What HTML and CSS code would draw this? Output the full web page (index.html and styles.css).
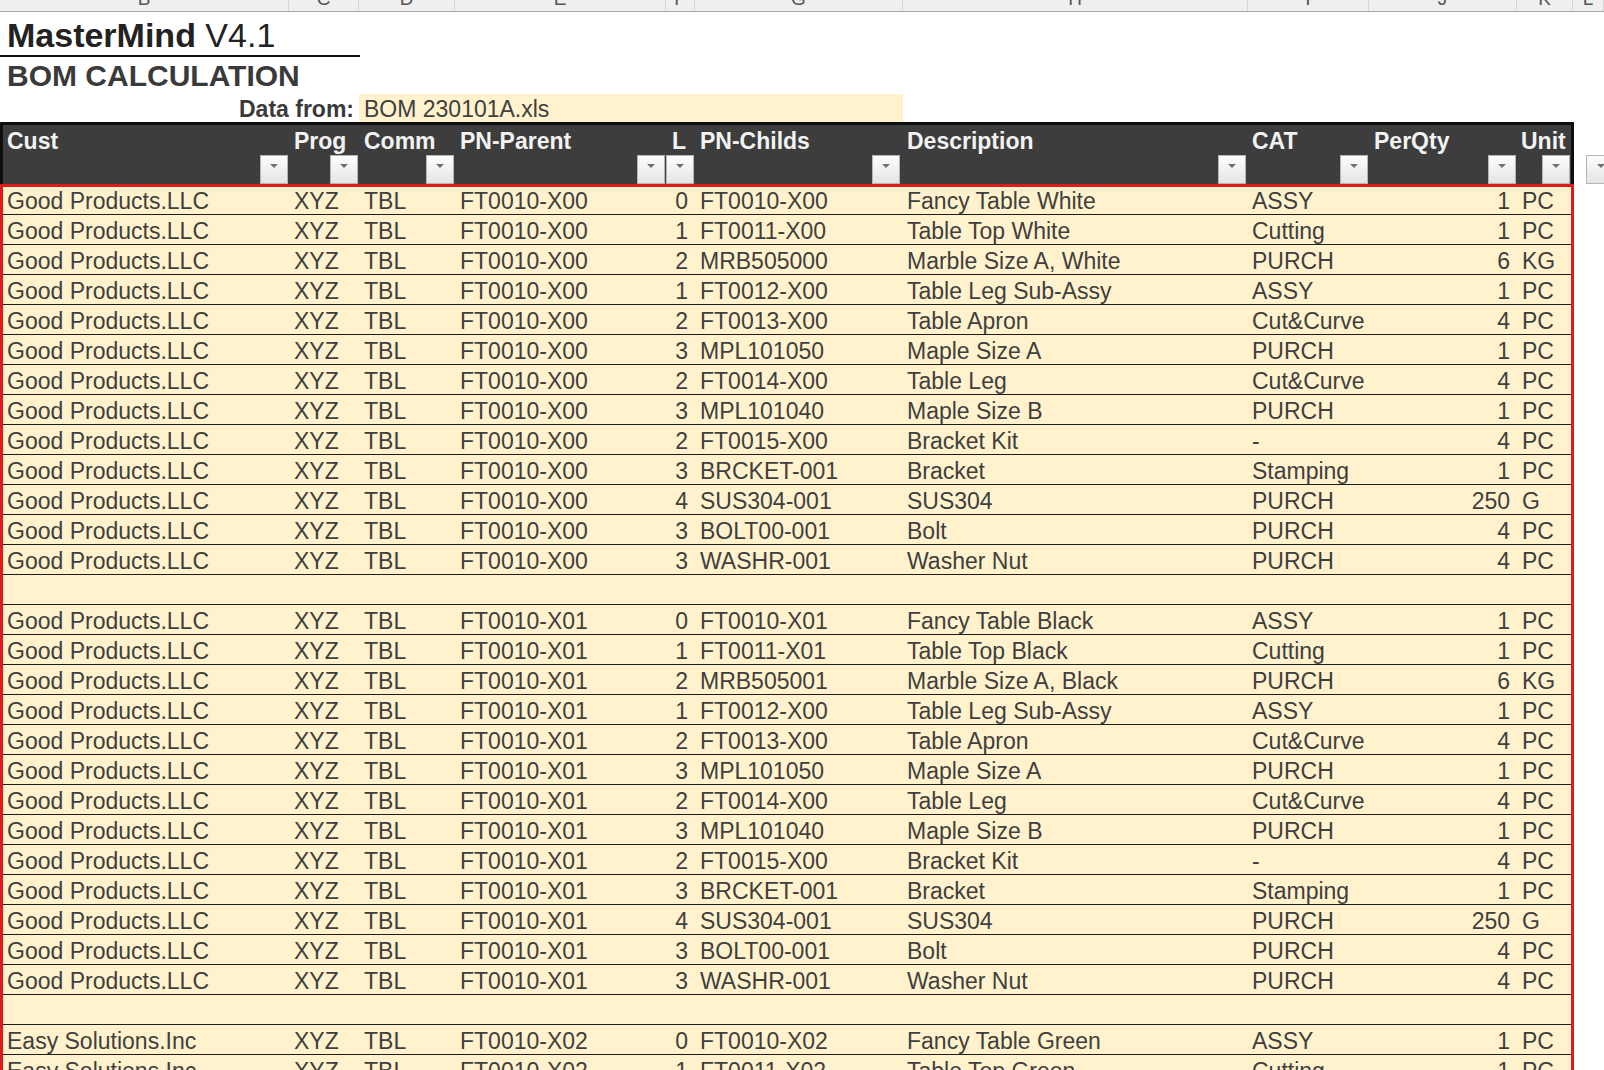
FILE: index.html
```html
<!DOCTYPE html>
<html lang="en">
<head>
<meta charset="utf-8">
<title>MasterMind V4.1 - BOM Calculation</title>
<link rel="stylesheet" href="styles.css">
</head>
<body>
<div class="sheet">
  <div class="colbar">
    <div class="ch">B</div><div class="ch">C</div><div class="ch">D</div><div class="ch">E</div><div class="ch">F</div><div class="ch">G</div><div class="ch">H</div><div class="ch">I</div><div class="ch">J</div><div class="ch">K</div><div class="ch">L</div>
  </div>

  <div class="title"><b>MasterMind</b> V4.1</div>
  <div class="subtitle">BOM CALCULATION</div>
  <div class="source">
    <div class="src-label">Data from:</div>
    <div class="src-value">BOM 230101A.xls</div>
  </div>

  <div class="table-area">
    <div class="table">
      <div class="thead">
        <div class="hrow">
          <span>Cust</span><span>Prog</span><span>Comm</span><span>PN-Parent</span><span>L</span><span>PN-Childs</span><span>Description</span><span>CAT</span><span>PerQty</span><span>Unit</span>
        </div>
        <div class="filters">
          <span class="dd"></span><span class="dd"></span><span class="dd"></span><span class="dd"></span><span class="dd"></span><span class="dd"></span><span class="dd"></span><span class="dd"></span><span class="dd"></span><span class="dd"></span>
        </div>
      </div>
      <div class="tbody">
        <div class="row"><span>Good Products.LLC</span><span>XYZ</span><span>TBL</span><span>FT0010-X00</span><span>0</span><span>FT0010-X00</span><span>Fancy Table White</span><span>ASSY</span><span>1</span><span>PC</span></div>
        <div class="row"><span>Good Products.LLC</span><span>XYZ</span><span>TBL</span><span>FT0010-X00</span><span>1</span><span>FT0011-X00</span><span>Table Top White</span><span>Cutting</span><span>1</span><span>PC</span></div>
        <div class="row"><span>Good Products.LLC</span><span>XYZ</span><span>TBL</span><span>FT0010-X00</span><span>2</span><span>MRB505000</span><span>Marble Size A, White</span><span>PURCH</span><span>6</span><span>KG</span></div>
        <div class="row"><span>Good Products.LLC</span><span>XYZ</span><span>TBL</span><span>FT0010-X00</span><span>1</span><span>FT0012-X00</span><span>Table Leg Sub-Assy</span><span>ASSY</span><span>1</span><span>PC</span></div>
        <div class="row"><span>Good Products.LLC</span><span>XYZ</span><span>TBL</span><span>FT0010-X00</span><span>2</span><span>FT0013-X00</span><span>Table Apron</span><span>Cut&amp;Curve</span><span>4</span><span>PC</span></div>
        <div class="row"><span>Good Products.LLC</span><span>XYZ</span><span>TBL</span><span>FT0010-X00</span><span>3</span><span>MPL101050</span><span>Maple Size A</span><span>PURCH</span><span>1</span><span>PC</span></div>
        <div class="row"><span>Good Products.LLC</span><span>XYZ</span><span>TBL</span><span>FT0010-X00</span><span>2</span><span>FT0014-X00</span><span>Table Leg</span><span>Cut&amp;Curve</span><span>4</span><span>PC</span></div>
        <div class="row"><span>Good Products.LLC</span><span>XYZ</span><span>TBL</span><span>FT0010-X00</span><span>3</span><span>MPL101040</span><span>Maple Size B</span><span>PURCH</span><span>1</span><span>PC</span></div>
        <div class="row"><span>Good Products.LLC</span><span>XYZ</span><span>TBL</span><span>FT0010-X00</span><span>2</span><span>FT0015-X00</span><span>Bracket Kit</span><span>-</span><span>4</span><span>PC</span></div>
        <div class="row"><span>Good Products.LLC</span><span>XYZ</span><span>TBL</span><span>FT0010-X00</span><span>3</span><span>BRCKET-001</span><span>Bracket</span><span>Stamping</span><span>1</span><span>PC</span></div>
        <div class="row"><span>Good Products.LLC</span><span>XYZ</span><span>TBL</span><span>FT0010-X00</span><span>4</span><span>SUS304-001</span><span>SUS304</span><span>PURCH</span><span>250</span><span>G</span></div>
        <div class="row"><span>Good Products.LLC</span><span>XYZ</span><span>TBL</span><span>FT0010-X00</span><span>3</span><span>BOLT00-001</span><span>Bolt</span><span>PURCH</span><span>4</span><span>PC</span></div>
        <div class="row"><span>Good Products.LLC</span><span>XYZ</span><span>TBL</span><span>FT0010-X00</span><span>3</span><span>WASHR-001</span><span>Washer Nut</span><span>PURCH</span><span>4</span><span>PC</span></div>
        <div class="row"><span></span><span></span><span></span><span></span><span></span><span></span><span></span><span></span><span></span><span></span></div>
        <div class="row"><span>Good Products.LLC</span><span>XYZ</span><span>TBL</span><span>FT0010-X01</span><span>0</span><span>FT0010-X01</span><span>Fancy Table Black</span><span>ASSY</span><span>1</span><span>PC</span></div>
        <div class="row"><span>Good Products.LLC</span><span>XYZ</span><span>TBL</span><span>FT0010-X01</span><span>1</span><span>FT0011-X01</span><span>Table Top Black</span><span>Cutting</span><span>1</span><span>PC</span></div>
        <div class="row"><span>Good Products.LLC</span><span>XYZ</span><span>TBL</span><span>FT0010-X01</span><span>2</span><span>MRB505001</span><span>Marble Size A, Black</span><span>PURCH</span><span>6</span><span>KG</span></div>
        <div class="row"><span>Good Products.LLC</span><span>XYZ</span><span>TBL</span><span>FT0010-X01</span><span>1</span><span>FT0012-X00</span><span>Table Leg Sub-Assy</span><span>ASSY</span><span>1</span><span>PC</span></div>
        <div class="row"><span>Good Products.LLC</span><span>XYZ</span><span>TBL</span><span>FT0010-X01</span><span>2</span><span>FT0013-X00</span><span>Table Apron</span><span>Cut&amp;Curve</span><span>4</span><span>PC</span></div>
        <div class="row"><span>Good Products.LLC</span><span>XYZ</span><span>TBL</span><span>FT0010-X01</span><span>3</span><span>MPL101050</span><span>Maple Size A</span><span>PURCH</span><span>1</span><span>PC</span></div>
        <div class="row"><span>Good Products.LLC</span><span>XYZ</span><span>TBL</span><span>FT0010-X01</span><span>2</span><span>FT0014-X00</span><span>Table Leg</span><span>Cut&amp;Curve</span><span>4</span><span>PC</span></div>
        <div class="row"><span>Good Products.LLC</span><span>XYZ</span><span>TBL</span><span>FT0010-X01</span><span>3</span><span>MPL101040</span><span>Maple Size B</span><span>PURCH</span><span>1</span><span>PC</span></div>
        <div class="row"><span>Good Products.LLC</span><span>XYZ</span><span>TBL</span><span>FT0010-X01</span><span>2</span><span>FT0015-X00</span><span>Bracket Kit</span><span>-</span><span>4</span><span>PC</span></div>
        <div class="row"><span>Good Products.LLC</span><span>XYZ</span><span>TBL</span><span>FT0010-X01</span><span>3</span><span>BRCKET-001</span><span>Bracket</span><span>Stamping</span><span>1</span><span>PC</span></div>
        <div class="row"><span>Good Products.LLC</span><span>XYZ</span><span>TBL</span><span>FT0010-X01</span><span>4</span><span>SUS304-001</span><span>SUS304</span><span>PURCH</span><span>250</span><span>G</span></div>
        <div class="row"><span>Good Products.LLC</span><span>XYZ</span><span>TBL</span><span>FT0010-X01</span><span>3</span><span>BOLT00-001</span><span>Bolt</span><span>PURCH</span><span>4</span><span>PC</span></div>
        <div class="row"><span>Good Products.LLC</span><span>XYZ</span><span>TBL</span><span>FT0010-X01</span><span>3</span><span>WASHR-001</span><span>Washer Nut</span><span>PURCH</span><span>4</span><span>PC</span></div>
        <div class="row"><span></span><span></span><span></span><span></span><span></span><span></span><span></span><span></span><span></span><span></span></div>
        <div class="row"><span>Easy Solutions.Inc</span><span>XYZ</span><span>TBL</span><span>FT0010-X02</span><span>0</span><span>FT0010-X02</span><span>Fancy Table Green</span><span>ASSY</span><span>1</span><span>PC</span></div>
        <div class="row"><span>Easy Solutions.Inc</span><span>XYZ</span><span>TBL</span><span>FT0010-X02</span><span>1</span><span>FT0011-X02</span><span>Table Top Green</span><span>Cutting</span><span>1</span><span>PC</span></div>
        <div class="row"><span>Easy Solutions.Inc</span><span>XYZ</span><span>TBL</span><span>FT0010-X02</span><span>2</span><span>MRB505002</span><span>Marble Size A, Green</span><span>PURCH</span><span>6</span><span>KG</span></div>
      </div>
    </div>
    <div class="outside">
      <span class="dd"></span>
    </div>
  </div>
</div>
</body>
</html>
```

FILE: styles.css
```css
html, body {
  margin: 0;
  padding: 0;
  width: 1604px;
  height: 1070px;
  overflow: hidden;
  background: #ffffff;
}

.sheet {
  font-family: "Liberation Sans", Arial, sans-serif;
  color: #3f3f3f;
  width: 1604px;
}

/* Excel column letters strip (cut off at top) */
.colbar {
  display: grid;
  grid-template-columns: 289px 70px 96px 211px 29px 208px 345px 121px 148px 56px 31px;
  height: 11px;
  overflow: hidden;
  background: #efefef;
  border-bottom: 1px solid #a9a9a9;
}
.ch {
  border-right: 1px solid #d4d4d4;
  text-align: center;
  font-size: 19px;
  line-height: 18px;
  color: #555555;
  margin-top: -10px;
  height: 21px;
}

/* Titles */
.title {
  width: 360px;
  padding: 4px 0 0 7px;
  box-sizing: border-box;
  height: 45px;
  line-height: 39px;
  font-size: 34px;
  color: #222222;
  border-bottom: 2px solid #111111;
  white-space: nowrap;
}
.title b {
  font-weight: bold;
}
.subtitle {
  height: 37px;
  line-height: 37px;
  padding-left: 7px;
  font-size: 30px;
  font-weight: bold;
  color: #3a3a3a;
  white-space: nowrap;
}

.source {
  display: flex;
  height: 28px;
}
.src-label {
  width: 359px;
  box-sizing: border-box;
  padding: 3px 5px 0 0;
  text-align: right;
  font-weight: bold;
  font-size: 23px;
  line-height: 25px;
  color: #3a3a3a;
  white-space: nowrap;
}
.src-value {
  width: 544px;
  box-sizing: border-box;
  padding: 3px 0 0 5px;
  background: #fff2cc;
  font-size: 23px;
  line-height: 25px;
  color: #404040;
  white-space: nowrap;
}

/* Table */
.table-area {
  display: flex;
  align-items: flex-start;
}
.table {
  width: 1574px;
  flex: none;
}
.thead {
  background: #3d3d3d;
  border: 3px solid #0e0e0e;
  border-bottom: none;
}
.hrow,
.filters,
.row {
  display: grid;
  grid-template-columns: 286px 70px 96px 211px 29px 208px 345px 121px 148px 54px;
}
.hrow {
  padding-top: 2px;
  height: 28px;
  line-height: 28px;
  font-size: 23px;
  font-weight: bold;
  color: #f2f2f2;
  white-space: nowrap;
}
.hrow span:nth-child(1) { padding-left: 4px; }
.hrow span:nth-child(2) { padding-left: 5px; }
.hrow span:nth-child(3) { padding-left: 5px; }
.hrow span:nth-child(4) { padding-left: 5px; }
.hrow span:nth-child(5) { text-align: right; padding-right: 9px; }
.hrow span:nth-child(6) { padding-left: 5px; }
.hrow span:nth-child(7) { padding-left: 4px; }
.hrow span:nth-child(8) { padding-left: 4px; }
.hrow span:nth-child(9) { padding-left: 5px; }
.hrow span:nth-child(10) { padding-left: 4px; }

.filters {
  height: 29px;
  align-items: end;
}
.filters .dd {
  justify-self: end;
  margin-right: 1px;
}
.filters .dd:nth-child(6) { margin-right: 3px; }
.filters .dd:nth-child(7) { margin-right: 2px; }

.dd {
  display: flex;
  justify-content: center;
  width: 28px;
  height: 29px;
  box-sizing: border-box;
  border: 1px solid #b5b5b5;
  background: linear-gradient(#fdfdfd, #e4e4e4);
}
.dd::after {
  content: "";
  margin-top: 8px;
  width: 0;
  height: 0;
  border-left: 4px solid transparent;
  border-right: 4px solid transparent;
  border-top: 4px solid #707070;
}

.outside {
  padding: 33px 0 0 12px;
}
.outside .dd {
  width: 30px;
}

.tbody {
  border: 3px solid #dc1c1c;
  border-bottom: none;
  background: #fff2cc;
}
.row {
  height: 30px;
  box-sizing: border-box;
  padding-top: 3px;
  line-height: 26px;
  font-size: 23px;
  color: #3f3f3f;
  border-bottom: 1px solid #1e1e1e;
  white-space: nowrap;
}
.row:first-child {
  height: 28px;
  padding-top: 1px;
}
.row span:nth-child(1) { padding-left: 4px; }
.row span:nth-child(2) { padding-left: 5px; }
.row span:nth-child(3) { padding-left: 5px; }
.row span:nth-child(4) { padding-left: 5px; }
.row span:nth-child(5) { text-align: right; padding-right: 7px; }
.row span:nth-child(6) { padding-left: 5px; }
.row span:nth-child(7) { padding-left: 4px; }
.row span:nth-child(8) { padding-left: 4px; }
.row span:nth-child(9) { text-align: right; padding-right: 7px; }
.row span:nth-child(10) { padding-left: 5px; }
```
